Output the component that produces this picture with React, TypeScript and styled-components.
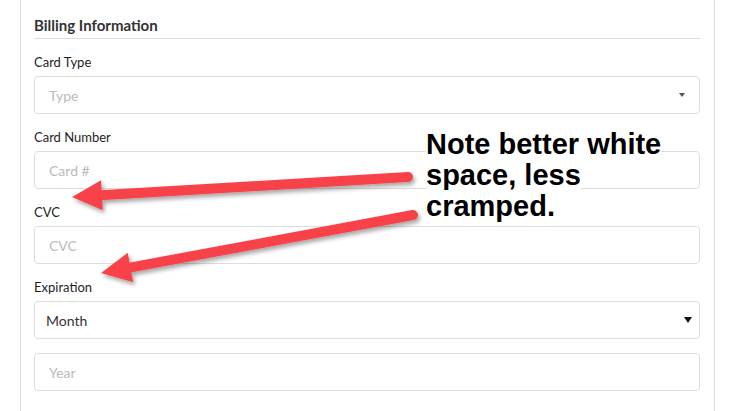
import React from 'react'
import styled, { createGlobalStyle } from 'styled-components'

const GlobalStyle = createGlobalStyle`
  html, body {
    margin: 0;
    padding: 0;
    background: #fff;
  }
  body {
    font-family: Lato, 'Noto Sans', sans-serif;
    color: #222;
  }
`

const Page = styled.div`
  position: relative;
  width: 730px;
  height: 411px;
  overflow: hidden;
`

const Panel = styled.section`
  box-sizing: border-box;
  margin-left: 20px;
  width: 695px;
  min-height: 411px;
  padding: 15px 14px 0 13px;
  border-left: 1px solid #ddd;
  border-right: 1px solid #ddd;
`

const Heading = styled.h3`
  margin: 0 0 13px;
  padding-bottom: 3px;
  font-size: 15px;
  line-height: 20px;
  font-weight: 700;
  color: #333;
  border-bottom: 1px solid #ddd;
`

const Group = styled.div`
  display: flex;
  flex-direction: column;
  gap: 14px;
  margin-bottom: 13px;
`

const Field = styled.div`
  display: flex;
  flex-direction: column;
`

const Label = styled.label`
  display: block;
  margin-bottom: 4px;
  font-size: 13px;
  line-height: 20px;
  color: #1e1e1e;
`

const Input = styled.input`
  box-sizing: border-box;
  width: 100%;
  height: 38px;
  padding: 0 14px;
  border: 1px solid #ddd;
  border-radius: 4px;
  font-family: Lato, sans-serif;
  font-size: 14px;
  color: #333;
  outline: none;

  &::placeholder {
    color: #bbb;
  }
`

const SelectWrap = styled.div`
  position: relative;
`

const Select = styled.select<{ $muted?: boolean; $pad: number }>`
  box-sizing: border-box;
  width: 100%;
  height: 38px;
  padding: 0 ${(p) => p.$pad}px;
  border: 1px solid #ddd;
  border-radius: 4px;
  background: #fff;
  appearance: none;
  font-family: Lato, sans-serif;
  font-size: 14px;
  color: ${(p) => (p.$muted ? '#bbb' : '#333')};
  outline: none;
`

const Caret = styled.span<{ $size: number; $color: string; $right: number }>`
  position: absolute;
  top: 50%;
  right: ${(p) => p.$right}px;
  width: 0;
  height: 0;
  margin-top: ${(p) => -p.$size / 2}px;
  border-left: ${(p) => p.$size / 2 + 1}px solid transparent;
  border-right: ${(p) => p.$size / 2 + 1}px solid transparent;
  border-top: ${(p) => p.$size}px solid ${(p) => p.$color};
  pointer-events: none;
`

const Overlay = styled.svg`
  position: absolute;
  inset: 0;
  pointer-events: none;
`

const Note = styled.p`
  position: absolute;
  left: 426px;
  top: 129px;
  width: 270px;
  margin: 0;
  font-family: 'Liberation Sans', Arial, sans-serif;
  font-weight: 700;
  font-size: 29px;
  line-height: 31px;
  color: #000;

  span {
    background: #fff;
  }
`

type ArrowProps = { tail: [number, number]; tip: [number, number] }

const Arrow = ({ tail, tip }: ArrowProps) => {
  const dx = tail[0] - tip[0]
  const dy = tail[1] - tip[1]
  const len = Math.hypot(dx, dy)
  const ux = dx / len
  const uy = dy / len
  const headLen = 30
  const half = 15
  const bx = tip[0] + ux * headLen
  const by = tip[1] + uy * headLen
  const px = -uy
  const py = ux
  const head = `${tip[0]},${tip[1]} ${bx + px * half},${by + py * half} ${bx - px * half},${by - py * half}`
  return (
    <g filter="url(#shadow)">
      <line
        x1={bx - ux * 2}
        y1={by - uy * 2}
        x2={tail[0]}
        y2={tail[1]}
        stroke="#f8434a"
        strokeWidth={10}
        strokeLinecap="round"
      />
      <polygon points={head} fill="#f8434a" />
    </g>
  )
}

export default function App() {
  return (
    <Page>
      <GlobalStyle />
      <Panel>
        <Heading>Billing Information</Heading>
        <Group>
          <Field>
            <Label>Card Type</Label>
            <SelectWrap>
              <Select $muted $pad={14} defaultValue="">
                <option value="" disabled>
                  Type
                </option>
              </Select>
              <Caret $size={4} $color="#555" $right={15} />
            </SelectWrap>
          </Field>
        </Group>
        <Group>
          <Field>
            <Label>Card Number</Label>
            <Input placeholder="Card #" />
          </Field>
        </Group>
        <Group>
          <Field>
            <Label>CVC</Label>
            <Input placeholder="CVC" />
          </Field>
        </Group>
        <Group>
          <Field>
            <Label>Expiration</Label>
            <SelectWrap>
              <Select $pad={11} defaultValue="month">
                <option value="month">Month</option>
              </Select>
              <Caret $size={6} $color="#111" $right={8} />
            </SelectWrap>
            <Input placeholder="Year" style={{ marginTop: 14 }} />
          </Field>
        </Group>
      </Panel>

      <Overlay width={730} height={411} viewBox="0 0 730 411">
        <defs>
          <filter id="shadow" x="-10%" y="-50%" width="120%" height="200%">
            <feDropShadow dx="2" dy="3" stdDeviation="2" floodColor="#000" floodOpacity="0.35" />
          </filter>
        </defs>
        <Arrow tail={[408, 177]} tip={[72, 197]} />
        <Arrow tail={[413, 215]} tip={[101, 273]} />
      </Overlay>

      <Note>
        <span>Note better white space, less cramped.</span>
      </Note>
    </Page>
  )
}
